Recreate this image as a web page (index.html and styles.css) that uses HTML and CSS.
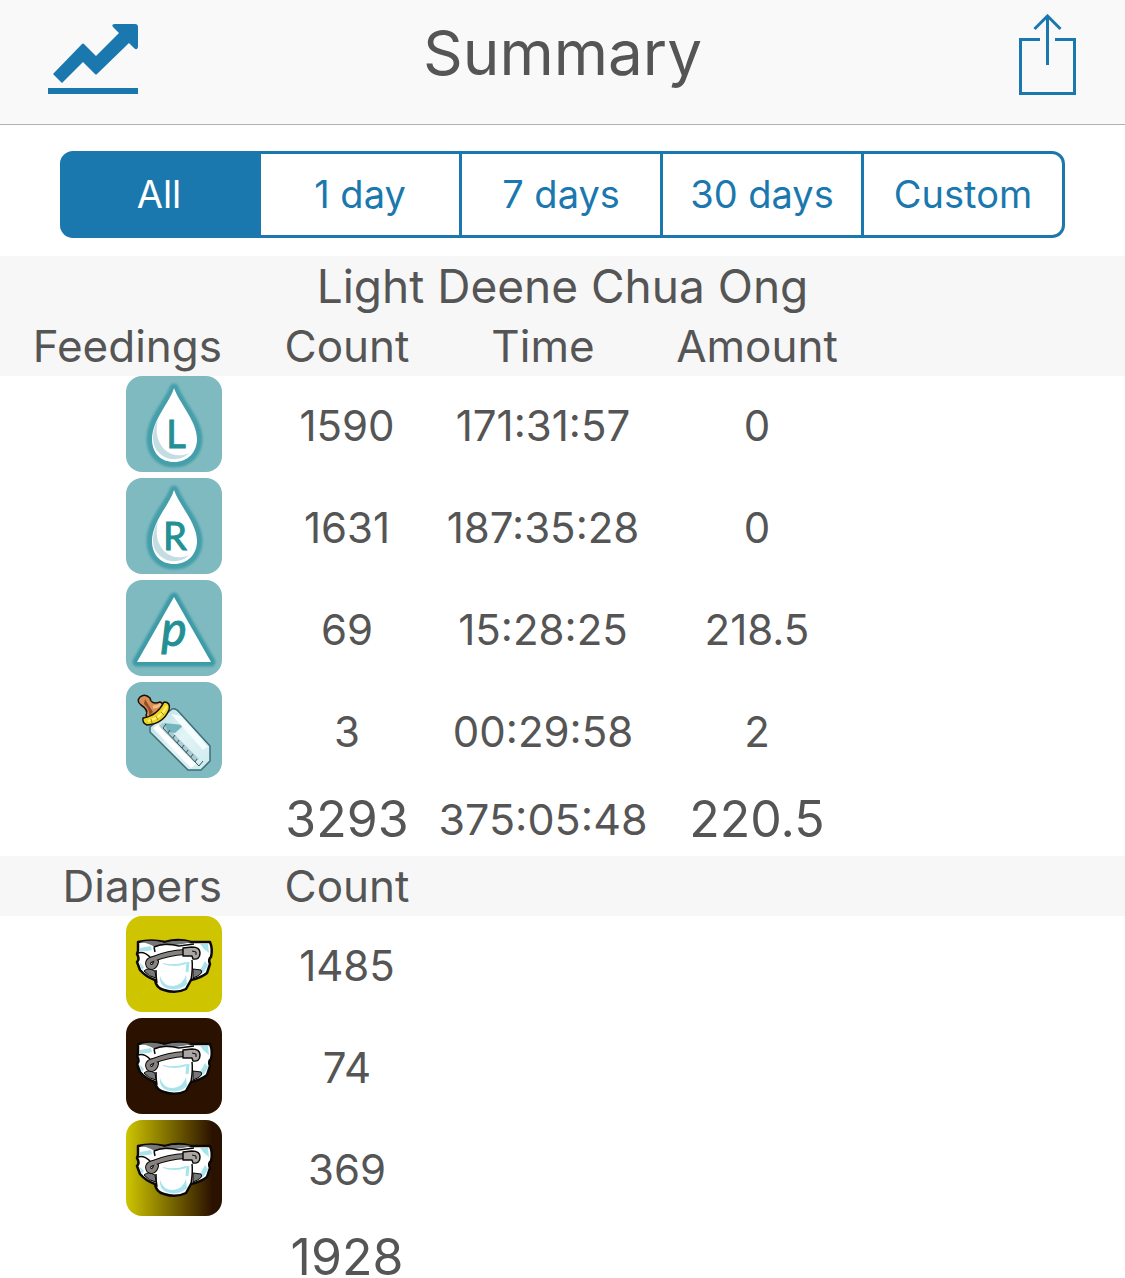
FILE: index.html
```html
<!DOCTYPE html>
<html lang="en">

<head>
  <meta charset="utf-8">
  <meta name="viewport" content="width=device-width, initial-scale=1.0">
  <title>Summary</title>
  <link rel="stylesheet" href="styles.css">
</head>

<body>
  <!-- Shared drawings -->
  <svg class="defs" width="0" height="0" aria-hidden="true">
    <defs>
      <filter id="glow" x="-20%" y="-20%" width="140%" height="140%">
        <feGaussianBlur stdDeviation="1.2" />
      </filter>
      <linearGradient id="glass" x1="0" y1="0" x2="1" y2="1">
        <stop offset="0" stop-color="#b9dde2" />
        <stop offset="0.5" stop-color="#e2f4f6" />
        <stop offset="1" stop-color="#cdebef" />
      </linearGradient>
    </defs>
    <symbol id="drop" viewBox="0 0 96 96">
      <path d="M48 12C44 25 25 43 25 63C25 78 35 87 48 87C62 87 72 77 72 63C72 45 53 27 48 12Z" fill="#459faa"
        stroke="#459faa" stroke-width="9" stroke-linejoin="round" filter="url(#glow)" />
      <path d="M48 12C44 26 26 44 26 63C26 77 35 86 48 86C62 86 71 76 71 63C71 45 53 27 48 12Z" fill="#fff" />
      <path d="M32 43C25 57 25 70 34 78C43 86 57 84 63 77C55 81 45 80 38 73C31 65 29 56 32 43Z" fill="#c4dde3" />
    </symbol>
    <symbol id="diaper" viewBox="0 0 96 96">
      <path
        d="M12 26Q25 23 39 26Q52 22 65 26L84 26Q87 33 85 41Q82 43 84 48L81 57Q75 62 65 64L60 73Q50 78 38 74Q30 72 29 64Q20 61 14 54L11 46Q14 43 11 38L12 35Z"
        fill="#fff" stroke="#0b0908" stroke-width="2.500" stroke-linejoin="round" />
      <path d="M15 26Q27 23 38 27Q51 23 65 26Q50 30 38 29L28 31Q25 28 15 26Z" fill="#777" />
      <path d="M14 32L25 30L26 34Q20 36 14 35ZM13 46L18 51L16 54ZM74 28L82 28L83 37L78 33ZM79 45L82 49L78 56L71 60Z"
        fill="#a9e4ec" />
      <path d="M28 31Q38 26 53 30L68 28M28 31L29 36M30 54Q30 62 31 67M12 37Q18 35 24 41M66 44Q67 52 65 64"
        fill="none" stroke="#0b0908" stroke-width="1.500" />
      <path d="M18 55Q22 51 29 55L30 62Q23 61 18 55ZM67 53L75 54Q78 58 67 62Z" fill="#777" stroke="#0b0908"
        stroke-width="1" />
      <path d="M34 60Q37 70 47 70Q57 69 60 59L61 68Q54 75 44 73Q33 71 34 60ZM37 47Q48 50 60 46L60 48Q48 52 37 48Z"
        fill="#a9e4ec" />
      <path d="M62 46L61 56" fill="none" stroke="#a9e4ec" stroke-width="3" />
      <path d="M59 36Q42 37 27 43Q20 45 23 50Q28 53 30 46" fill="none" stroke="#0b0908" stroke-width="6"
        stroke-linecap="round" />
      <path d="M59 36Q42 37 27 43Q20 45 23 50Q28 53 30 46" fill="none" stroke="#85827f" stroke-width="4"
        stroke-linecap="round" />
      <path d="M57 32L66 31Q74 31 74 37Q74 44 67 43L66 40L57 40Z" fill="#aaa6a3" stroke="#0b0908" stroke-width="1.500"
        stroke-linejoin="round" />
      <path d="M66 35L70 36L70 39" fill="none" stroke="#0b0908" />
    </symbol>
  </svg>

  <header class="navbar">
    <button type="button" class="icon-btn" aria-label="Charts">
      <svg class="chart-icon" viewBox="0 0 90 72" aria-hidden="true">
        <path
          d="M5 50L34 20Q35 19 36 20L48 32L71 9L65 3Q63 0 67 0H87Q90 0 90 3V23Q89 27 86 24L81 19L49 50Q48 51 47 50L35 38L14 59Z"
          fill="#1b78ae" />
        <rect y="64" width="90" height="6" fill="#1b78ae" />
      </svg>
    </button>
    <h1>Summary</h1>
    <button type="button" class="icon-btn" aria-label="Share">
      <svg class="share-icon" viewBox="0 0 58 82" aria-hidden="true">
        <path d="M21 25.500H1.500V79.500H55.500V25.500H36M28.500 51V2M15.500 15L28.500 2L41.500 15" fill="none"
          stroke="#1b78ae" stroke-width="3" />
      </svg>
    </button>
  </header>

  <main>
    <div class="segments" role="group" aria-label="Period">
      <button type="button" class="segment active" aria-pressed="true">All</button>
      <button type="button" class="segment" aria-pressed="false">1 day</button>
      <button type="button" class="segment" aria-pressed="false">7 days</button>
      <button type="button" class="segment" aria-pressed="false">30 days</button>
      <button type="button" class="segment" aria-pressed="false">Custom</button>
    </div>

    <h2>Light Deene Chua Ong</h2>

    <table class="summary">
      <colgroup>
        <col class="col-type">
        <col class="col-count">
        <col class="col-time">
        <col class="col-amount">
        <col>
      </colgroup>
      <thead>
        <tr>
          <th scope="col">Feedings</th>
          <th scope="col">Count</th>
          <th scope="col">Time</th>
          <th scope="col">Amount</th>
          <td></td>
        </tr>
      </thead>
      <tbody>
        <tr>
          <th scope="row">
            <svg class="tile teal" viewBox="0 0 96 96" role="img" aria-label="Left">
              <use href="#drop" />
              <text class="letter" x="50" y="72">L</text>
            </svg>
          </th>
          <td>1590</td>
          <td>171:31:57</td>
          <td>0</td>
        </tr>
        <tr>
          <th scope="row">
            <svg class="tile teal" viewBox="0 0 96 96" role="img" aria-label="Right">
              <use href="#drop" />
              <text class="letter" x="49" y="72">R</text>
            </svg>
          </th>
          <td>1631</td>
          <td>187:35:28</td>
          <td>0</td>
        </tr>
        <tr>
          <th scope="row">
            <svg class="tile teal" viewBox="0 0 96 96" role="img" aria-label="Pump">
              <path d="M48 17L85 82H11Z" fill="#3d9ba7" stroke="#3d9ba7" stroke-width="9" stroke-linejoin="round"
                filter="url(#glow)" />
              <path d="M48 17L85 82H11Z" fill="#fff" />
              <text class="letter pump" x="48" y="66">p</text>
            </svg>
          </th>
          <td>69</td>
          <td>15:28:25</td>
          <td>218.5</td>
        </tr>
        <tr>
          <th scope="row">
            <svg class="tile teal" viewBox="0 0 96 96" role="img" aria-label="Bottle">
              <path d="M24 45L46 27Q50 26 53 30L84 64V79L75 88L62 88L24 50Z" fill="url(#glass)" stroke="#3e6c77"
                stroke-width="1.500" stroke-linejoin="round" />
              <path d="M27 46L32 42L70 82L65 86Z" fill="#fff" />
              <path d="M33 44L37 41L73 77L68 80Z" fill="#a9cbd3" />
              <path d="M38 41L58 43L49 51L42 50Z" fill="#75b5bf" />
              <path d="M45 32L55 34L82 65L77 68Z" fill="#f4fcfd" />
              <path
                d="M40 42L37 46L73 84L77 79M42 51L44 48M47 56L49 53M51 61L53 58M56 66L58 63M60 71L62 68M65 75L67 72M69 80L71 77"
                fill="none" stroke="#39565e" />
              <path d="M20 33Q23 28 15 23Q10 19 14 15Q19 11 24 16Q25 23 34 20L41 24L22 38Z" fill="#d98e55"
                stroke="#17110c" stroke-width="1.500" stroke-linejoin="round" />
              <path d="M19 17Q23 24 27 30L23 34Q24 27 18 22Z" fill="#924d24" />
              <path d="M27 25Q32 25 35 22" fill="none" stroke="#f5bd86" stroke-width="3" />
              <path d="M17 36Q31 34 38 20Q45 20 43 28Q37 42 21 43Q16 41 17 36Z" fill="#eed51f" stroke="#17110c"
                stroke-width="1.500" stroke-linejoin="round" />
              <path d="M22 39Q35 36 41 24" fill="none" stroke="#fff276" stroke-width="2" />
              <path d="M25 37L26 41M30 34L32 38M35 30L38 33" stroke="#a18b15" />
            </svg>
          </th>
          <td>3</td>
          <td>00:29:58</td>
          <td>2</td>
        </tr>
        <tr class="total">
          <td></td>
          <td>3293</td>
          <td class="total-time">375:05:48</td>
          <td>220.5</td>
        </tr>
      </tbody>
    </table>

    <table class="summary">
      <colgroup>
        <col class="col-type">
        <col class="col-count">
        <col>
      </colgroup>
      <thead>
        <tr>
          <th scope="col">Diapers</th>
          <th scope="col">Count</th>
          <td></td>
        </tr>
      </thead>
      <tbody>
        <tr>
          <th scope="row">
            <svg class="tile wet" viewBox="0 0 96 96" role="img" aria-label="Wet">
              <use href="#diaper" />
            </svg>
          </th>
          <td>1485</td>
        </tr>
        <tr>
          <th scope="row">
            <svg class="tile dirty" viewBox="0 0 96 96" role="img" aria-label="Dirty">
              <use href="#diaper" />
            </svg>
          </th>
          <td>74</td>
        </tr>
        <tr>
          <th scope="row">
            <svg class="tile mixed" viewBox="0 0 96 96" role="img" aria-label="Mixed">
              <use href="#diaper" />
            </svg>
          </th>
          <td>369</td>
        </tr>
        <tr class="total last">
          <td></td>
          <td>1928</td>
        </tr>
      </tbody>
    </table>
  </main>
</body>

</html>
```
FILE: styles.css
```css
* {
  box-sizing: border-box;
}

body {
  margin: 0;
  font-family: "Inter", sans-serif;
  color: #555555;
  background-color: #ffffff;
}

button {
  font: inherit;
  cursor: pointer;
}

.defs {
  position: absolute;
}

.navbar {
  display: flex;
  justify-content: space-between;
  align-items: flex-start;
  padding: 14px 48px 28px;
  background-color: #f9f9f9;
  border-bottom: 1px solid #b2b2b2;
}

h1 {
  margin: 0;
  font-size: 62px;
  font-weight: 400;
  line-height: 78px;
}

.icon-btn {
  display: flex;
  width: 90px;
  padding: 0;
  border: none;
  background: none;
}

.chart-icon {
  width: 90px;
  height: 72px;
  margin-top: 10px;
}

.share-icon {
  width: 58px;
  height: 82px;
  margin-left: auto;
}

.segments {
  display: flex;
  margin: 26px 60px 18px;
}

.segment {
  flex: 1 1 0;
  padding: 0;
  border: 3px solid #1b78ae;
  border-left: none;
  background-color: #ffffff;
  color: #1b78ae;
  font-size: 38px;
  line-height: 81px;
}

.segment:first-child {
  border-radius: 13px 0 0 13px;
}

.segment:last-child {
  border-radius: 0 13px 13px 0;
}

.segment.active {
  background-color: #1b78ae;
  color: #ffffff;
}

h2 {
  margin: 0;
  font-size: 46px;
  font-weight: 400;
  line-height: 60px;
  text-align: center;
  background-color: #f7f7f7;
}

.summary {
  width: 100%;
  table-layout: fixed;
  border-collapse: collapse;
  text-align: center;
}

.col-type {
  width: 256px;
}

.col-count {
  width: 182px;
}

.col-time {
  width: 210px;
}

.col-amount {
  width: 218px;
}

.summary th,
.summary td {
  padding: 0;
  font-weight: 400;
  white-space: nowrap;
}

.summary thead {
  background-color: #f7f7f7;
  font-size: 44px;
  line-height: 60px;
}

.summary tbody {
  font-size: 42px;
  line-height: 100px;
}

.summary tbody td {
  vertical-align: top;
}

.summary th:first-child {
  padding-right: 34px;
  text-align: right;
}

.summary .total td {
  padding: 14px 0 16px;
  font-size: 50px;
  line-height: 42px;
}

.summary .total .total-time {
  font-size: 43px;
}

.summary .last td {
  padding-bottom: 0;
}

.tile {
  display: block;
  width: 96px;
  height: 96px;
  margin: 0 0 6px auto;
  border-radius: 16px;
}

.teal {
  background-color: #7fbac0;
}

.wet {
  background-color: #cec500;
}

.dirty {
  background-color: #2b1200;
}

.mixed {
  background: linear-gradient(to right, #cec500, #2b1200 90%);
}

.letter {
  font-family: "Lato", sans-serif;
  font-size: 38px;
  font-weight: 400;
  text-anchor: middle;
  fill: #239095;
  stroke: #239095;
}

.pump {
  font-size: 48px;
  font-style: italic;
}
```
